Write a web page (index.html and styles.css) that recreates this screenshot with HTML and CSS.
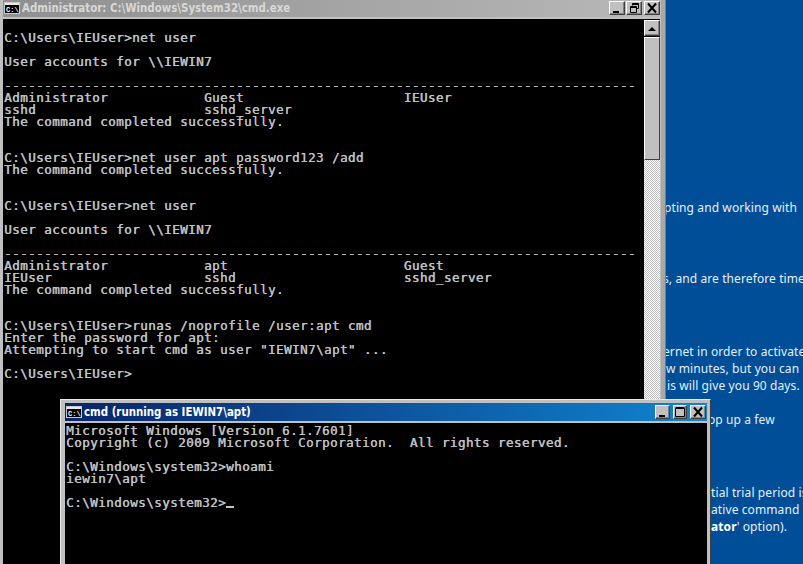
FILE: index.html
```html
<!DOCTYPE html>
<html lang="en">
<head>
<meta charset="utf-8">
<title>cmd</title>
<link rel="stylesheet" href="styles.css">
</head>
<body>
<main class="desktop">
  <section class="notes">
    <p class="para first"><span class="line i4">pting and working with</span></p>
    <p class="para second"><span class="line i3">s, and are therefore time</span></p>
    <p class="para third">
      <span class="line i3">ernet in order to activate</span>
      <span class="line i6">w minutes, but you can</span>
      <span class="line i7">is will give you 90 days.</span>
    </p>
    <p class="para fourth"><span class="line i48">op up a few</span></p>
    <p class="para third">
      <span class="line i51">tial trial period is</span>
      <span class="line i51">ative command</span>
      <span class="line i51"><b>ator</b>' option).</span>
    </p>
  </section>

  <section class="window back">
    <header class="titlebar">
      <svg class="appicon" viewBox="0 0 16 12" width="16" height="12"><rect x=".5" y=".5" width="15" height="11" fill="#000" stroke="#c8c8c8"/><rect x="1" y="1" width="14" height="2" fill="#e8e8e8"/><text x="2" y="9.500" class="icontext">C:\_</text></svg>
      <h1 class="title">Administrator: C:\Windows\System32\cmd.exe</h1>
      <div class="controls">
        <button class="ctl"><svg viewBox="0 0 14 12" width="14" height="12"><rect x="3" y="9" width="6" height="2"/></svg></button>
        <button class="ctl"><svg viewBox="0 0 14 12" width="14" height="12"><path d="M5.500 3.500V1.500h6v5H9.500M3.500 4.500h6v6h-6zM3.500 5.500h6M5.500 2.500h6" fill="none" stroke="#000"/></svg></button>
        <button class="ctl close"><svg viewBox="0 0 14 12" width="14" height="12"><path d="M3 1.500l8 9M11 1.500l-8 9" fill="none" stroke="#000" stroke-width="2"/></svg></button>
      </div>
    </header>
    <div class="body">
<pre class="console">

C:\Users\IEUser&gt;net user

User accounts for \\IEWIN7

-------------------------------------------------------------------------------
Administrator            Guest                    IEUser
sshd                     sshd_server
The command completed successfully.


C:\Users\IEUser&gt;net user apt password123 /add
The command completed successfully.


C:\Users\IEUser&gt;net user

User accounts for \\IEWIN7

-------------------------------------------------------------------------------
Administrator            apt                      Guest
IEUser                   sshd                     sshd_server
The command completed successfully.


C:\Users\IEUser&gt;runas /noprofile /user:apt cmd
Enter the password for apt:
Attempting to start cmd as user "IEWIN7\apt" ...

C:\Users\IEUser&gt;
</pre>
      <div class="scrollbar">
        <button class="sbtn"><svg viewBox="0 0 14 13" width="14" height="13"><path d="M3 9h8L7 5z"/></svg></button>
        <div class="thumb"></div>
        <div class="track"></div>
      </div>
    </div>
  </section>

  <section class="window front">
    <header class="titlebar">
      <svg class="appicon" viewBox="0 0 16 12" width="16" height="12"><rect x=".5" y=".5" width="15" height="11" fill="#000" stroke="#c8c8c8"/><rect x="1" y="1" width="14" height="2" fill="#e8e8e8"/><text x="2" y="9.500" class="icontext">C:\_</text></svg>
      <h1 class="title">cmd (running as IEWIN7\apt)</h1>
      <div class="controls">
        <button class="ctl min"><svg viewBox="0 0 13 12" width="13" height="12"><rect x="3" y="9" width="6" height="2"/></svg></button>
        <button class="ctl max"><svg viewBox="0 0 12 12" width="12" height="12"><path d="M1.500 2.500h9v8h-9zM1.500 1.500h9" fill="none" stroke="#000"/></svg></button>
        <button class="ctl close"><svg viewBox="0 0 14 12" width="14" height="12"><path d="M3 1.500l8 9M11 1.500l-8 9" fill="none" stroke="#000" stroke-width="2"/></svg></button>
      </div>
    </header>
    <div class="body">
<pre class="console">Microsoft Windows [Version 6.1.7601]
Copyright (c) 2009 Microsoft Corporation.  All rights reserved.

C:\Windows\system32&gt;whoami
iewin7\apt

C:\Windows\system32&gt;<span class="cursor"></span></pre>
    </div>
  </section>
</main>
</body>
</html>
```
FILE: styles.css
```css
* { box-sizing: border-box; }
html, body { margin: 0; padding: 0; height: 100%; overflow: hidden; }
.desktop {
  position: relative;
  width: 803px;
  height: 564px;
  overflow: hidden;
  background: #004e98;
}
.notes {
  padding-top: 199px;
  padding-left: 660px;
  font: 12px/17px "Noto Sans", sans-serif;
  letter-spacing: .1px;
  color: #e6f0fa;
  white-space: nowrap;
}
.para { margin: 0; }
.para.second { margin-top: 54px; }
.para.third { margin-top: 56px; }
.para.fourth { margin-top: 17px; }
.line { display: block; }
.line b { font-weight: 700; color: #fff; }
.i3 { padding-left: 3px; }
.i4 { padding-left: 4px; }
.i6 { padding-left: 6px; }
.i7 { padding-left: 7px; }
.i48 { padding-left: 48px; }
.i51 { padding-left: 51px; }

.window {
  position: absolute;
  display: flex;
  flex-direction: column;
  background: #c0c0c0;
}
.back {
  left: -2px;
  top: 0;
  width: 668px;
  height: 570px;
  padding: 0 5px 0 5px;
  border-right: 1px solid #7a7a7a;
  box-shadow: inset -4px 0 0 #a8a8a8;
}
.front {
  left: 60px;
  top: 399px;
  width: 651px;
  height: 175px;
  padding: 3px 3px 0 4px;
  border-top: 1px solid #e8e8e8;
  border-left: 1px solid #e8e8e8;
  border-right: 1px solid #404040;
}
.titlebar {
  display: flex;
  align-items: center;
  flex: none;
  gap: 2px;
}
.back .titlebar {
  height: 17px;
  padding: 0 0 1px 1px;
  background: linear-gradient(90deg, #8f8f8f, #b8b8b8);
  margin-bottom: 2px;
}
.front .titlebar {
  height: 18px;
  padding: 0 1px 0 1px;
  background: linear-gradient(90deg, #0a246a, #1084d0);
  margin-bottom: 2px;
}
.appicon { flex: none; }
.icontext { font: bold 7px "Liberation Mono", monospace; fill: #fff; }
.title {
  flex: 1;
  margin: 0;
  font: 700 11.4px/17px "DejaVu Sans Condensed", "Liberation Sans", sans-serif;
  white-space: nowrap;
}
.back .title { color: #d8d8d8; }
.front .title { color: #fff; }
.controls { display: flex; flex: none; gap: 1px; }
.front .controls { gap: 3px; }
.ctl, .sbtn {
  display: block;
  padding: 0;
  background: #c0c0c0;
  border: 1px solid;
  border-color: #fff #404040 #404040 #fff;
  box-shadow: inset -1px -1px 0 #808080;
}
.ctl {
  width: 16px;
  height: 14px;
}
.back .ctl.close { margin-left: 1px; }
.ctl.min { width: 15px; }
.ctl.max { width: 14px; }
.ctl svg, .sbtn svg { display: block; }
.body {
  display: flex;
  flex: 1;
  min-height: 0;
  background: #000;
}
.console {
  flex: 1;
  margin: 0;
  padding: 2px 0 0 1px;
  color: #c0c0c0;
  font: 400 12.6px/12px "DejaVu Sans Mono", monospace;
  letter-spacing: .415px;
  text-shadow: .45px 0 0 #c0c0c0;
  background: #000;
  overflow: hidden;
}
.back .console { padding-top: 1px; }
.cursor {
  display: inline-block;
  width: 8px;
  height: 2px;
  background: #c0c0c0;
  vertical-align: -1px;
}
.scrollbar {
  display: flex;
  flex-direction: column;
  flex: none;
  width: 16px;
  padding-top: 1px;
  gap: 1px;
  background: #000;
}
.sbtn { flex: none; width: 16px; height: 16px; }
.thumb {
  flex: none;
  width: 16px;
  height: 123px;
  background: #c0c0c0;
  border: 1px solid;
  border-color: #fff #404040 #404040 #fff;
}
.track {
  flex: 1;
  margin-top: -1px;
  background: repeating-conic-gradient(#fff 0 25%, #c0c0c0 0 50%) 0 0 / 2px 2px;
}
```
